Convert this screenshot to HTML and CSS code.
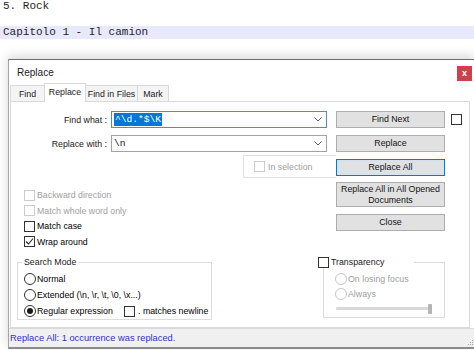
FILE: index.html
```html
<!DOCTYPE html>
<html>
<head>
<meta charset="utf-8">
<link rel="stylesheet" href="styles.css">
</head>
<body>
<div class="editor">
  <div class="line">5. Rock</div>
  <div class="line"></div>
  <div class="line current">Capitolo 1 - Il camion</div>
</div>

<div class="dialog">
  <div class="titlebar">
    <span class="title">Replace</span>
    <span class="close">x</span>
  </div>
  <div class="tabs">
    <div class="tab t-find">Find</div>
    <div class="tab t-replace active">Replace</div>
    <div class="tab t-files">Find in Files</div>
    <div class="tab t-mark">Mark</div>
  </div>
  <div class="panel">
    <div class="upper">
      <div class="left">
        <div class="field">
          <label>Find what :</label>
          <div class="combo focused">
            <span class="mono sel">^\d.*$\K</span>
            <svg class="chev" width="8" height="5" viewBox="0 0 8 5"><polyline points="0.5,0.5 4,4 7.5,0.5" fill="none" stroke="#606060" stroke-width="1"/></svg>
          </div>
        </div>
        <div class="field">
          <label>Replace with :</label>
          <div class="combo">
            <span class="mono">\n</span>
            <svg class="chev" width="8" height="5" viewBox="0 0 8 5"><polyline points="0.5,0.5 4,4 7.5,0.5" fill="none" stroke="#606060" stroke-width="1"/></svg>
          </div>
        </div>
        <div class="insel">
          <span class="cb disabled"></span>
          <span class="dis-text">In selection</span>
        </div>
        <div class="options">
          <div class="opt"><span class="cb disabled"></span><span class="dis-text">Backward direction</span></div>
          <div class="opt"><span class="cb disabled"></span><span class="dis-text">Match whole word only</span></div>
          <div class="opt"><span class="cb"></span><span>Match case</span></div>
          <div class="opt"><span class="cb checked"><svg width="9" height="9" viewBox="0 0 9 9"><polyline points="1,4.5 3.5,7 8,1.5" fill="none" stroke="#222" stroke-width="1.1"/></svg></span><span>Wrap around</span></div>
        </div>
      </div>
      <div class="buttons">
        <div class="btn">Find Next</div>
        <div class="btn gap7">Replace</div>
        <div class="btn gap7 default">Replace All</div>
        <div class="btn gap6 tall">Replace All in All Opened<br>Documents</div>
        <div class="btn gap7">Close</div>
      </div>
      <div class="side"><span class="cb"></span></div>
    </div>
    <div class="lower">
      <fieldset class="group search">
        <legend>Search Mode</legend>
        <div class="rrow"><span class="radio"></span><span>Normal</span></div>
        <div class="rrow"><span class="radio"></span><span>Extended (\n, \r, \t, \0, \x...)</span></div>
        <div class="rrow"><span class="radio on"></span><span class="regex">Regular expression</span><span class="cb"></span><span class="dotnl">. matches newline</span></div>
      </fieldset>
      <fieldset class="group transp">
        <legend><span class="cb"></span><span>Transparency</span></legend>
        <div class="trow"><span class="radio disabled"></span><span class="dis-text">On losing focus</span></div>
        <div class="trow"><span class="radio disabled"></span><span class="dis-text">Always</span></div>
        <div class="slider"><span class="track"></span><span class="thumb"></span></div>
      </fieldset>
    </div>
  </div>
  <div class="status">
    <span>Replace All: 1 occurrence was replaced.</span>
    <svg class="grip" width="7" height="7" viewBox="0 0 7 7"><rect x="5" y="1" width="1" height="1" fill="#a0a0a0"/><rect x="3" y="3" width="1" height="1" fill="#a0a0a0"/><rect x="5" y="3" width="1" height="1" fill="#a0a0a0"/><rect x="1" y="5" width="1" height="1" fill="#a0a0a0"/><rect x="3" y="5" width="1" height="1" fill="#a0a0a0"/><rect x="5" y="5" width="1" height="1" fill="#a0a0a0"/></svg>
  </div>
</div>
</body>
</html>
```

FILE: styles.css
```css
* { box-sizing: border-box; }

html, body {
  margin: 0;
  padding: 0;
}

body {
  width: 474px;
  height: 350px;
  overflow: hidden;
  background: #ffffff;
  position: relative;
  font-family: "Liberation Sans", Arial, sans-serif;
}

.editor {
  font-family: "Liberation Mono", "Courier New", monospace;
  font-size: 11px;
  line-height: 13px;
  color: #1e1e1e;
}

.line {
  height: 13px;
  padding-left: 3px;
  white-space: pre;
}

.line.current {
  background: #e8e8ff;
}

.dialog {
  position: absolute;
  left: 8px;
  top: 59px;
  width: 467px;
  height: 290px;
  background: #ffffff;
  border-top: 1px solid #6e6e6e;
  border-left: 1px solid #a6a6a6;
  border-bottom: 2px solid #8c8c8c;
  box-shadow: 0 -3px 10px rgba(0, 0, 0, 0.16);
  font-size: 8.8px;
  color: #000000;
}

.titlebar {
  height: 24px;
  display: flex;
  align-items: flex-start;
  justify-content: space-between;
  padding-left: 8px;
}

.title {
  font-size: 10px;
  margin-top: 7px;
  color: #1a1a1a;
}

.close {
  width: 15px;
  height: 15px;
  margin-top: 6px;
  margin-right: 3px;
  background: #c9434b;
  color: #ffffff;
  font-size: 9px;
  font-weight: bold;
  display: flex;
  align-items: center;
  justify-content: center;
  line-height: 1;
}

.tabs {
  height: 17px;
  display: flex;
  align-items: flex-end;
  padding-left: 1px;
}

.tab {
  height: 16px;
  border: 1px solid #d9d9d9;
  border-bottom: none;
  background: #f4f4f4;
  display: flex;
  align-items: center;
  justify-content: center;
  color: #1a1a1a;
  padding-top: 1px;
  white-space: nowrap;
}

.t-find { width: 35px; }
.t-replace { width: 42px; }
.t-files { width: 53px; }
.t-mark { width: 32px; }

.tab + .tab { margin-left: -1px; }

.tab.active {
  height: 19px;
  background: #ffffff;
  margin-bottom: -1px;
  position: relative;
  z-index: 1;
  padding-top: 0;
  padding-bottom: 2px;
}

.panel {
  margin-left: 1px;
  width: 460px;
  height: 227px;
  border: 1px solid #d9d9d9;
  background: #ffffff;
}

.upper {
  display: flex;
  padding-top: 9px;
}

.left {
  width: 325px;
}

.field {
  display: flex;
  align-items: center;
  height: 17px;
}

.field + .field { margin-top: 7px; }

.field label {
  width: 97px;
  text-align: right;
  padding-right: 1px;
  white-space: nowrap;
  color: #1a1a1a;
}

.combo {
  margin-left: 3px;
  width: 216px;
  height: 17px;
  border: 1px solid #a3a3a3;
  display: flex;
  align-items: center;
  padding-left: 2px;
}

.combo.focused {
  border-color: #5c88bb;
}

.mono {
  font-family: "Liberation Mono", "Courier New", monospace;
  font-size: 9.6px;
  line-height: 13px;
  color: #111111;
}

.sel {
  background: #0078d7;
  color: #ffffff;
  padding: 0 1px;
}

.chev {
  margin-left: auto;
  margin-right: 4px;
}

.insel {
  margin-top: 3px;
  margin-left: 232px;
  height: 23px;
  border: 1px solid #e1e1e1;
  border-right: none;
  display: flex;
  align-items: center;
  padding-left: 10px;
  gap: 3px;
}

.cb {
  width: 11px;
  height: 11px;
  border: 1px solid #333333;
  background: #ffffff;
  flex: 0 0 11px;
  display: flex;
  align-items: center;
  justify-content: center;
}

.cb.disabled {
  border-color: #cccccc;
}

.dis-text {
  color: #a0a0a0;
}

.options {
  margin-top: 9.5px;
  padding-left: 13px;
}

.opt {
  height: 15.5px;
  display: flex;
  align-items: center;
  gap: 2px;
  white-space: nowrap;
}

.buttons {
  width: 109px;
  display: flex;
  flex-direction: column;
}

.btn {
  height: 17px;
  border: 1px solid #adadad;
  background: #e1e1e1;
  display: flex;
  align-items: center;
  justify-content: center;
  text-align: center;
  line-height: 11px;
  color: #111111;
}

.btn.gap7 { margin-top: 7px; }
.btn.gap6 { margin-top: 6px; }
.btn.tall { height: 25px; }

.btn.default {
  border-color: #0078d7;
  box-shadow: inset 0 0 0 1px #cfe3f6;
}

.side {
  margin-left: 6px;
  padding-top: 3px;
}

.lower {
  display: flex;
  margin-top: 6.5px;
}

.group {
  margin: 0;
  border: 1px solid #dcdcdc;
  min-width: 0;
}

.group legend {
  padding: 0 2px;
  line-height: 12px;
  height: 12px;
  color: #1a1a1a;
}

.search {
  margin-left: 6px;
  width: 195px;
  height: 64px;
  padding: 3px 0 0 6px;
}

.search legend {
  margin-left: -2px;
}

.rrow {
  height: 16px;
  display: flex;
  align-items: center;
  gap: 1px;
  white-space: nowrap;
}

.radio {
  width: 12px;
  height: 12px;
  border: 1px solid #333333;
  border-radius: 50%;
  background: #ffffff;
  flex: 0 0 12px;
  display: flex;
  align-items: center;
  justify-content: center;
}

.radio.on::after {
  content: "";
  width: 6px;
  height: 6px;
  border-radius: 50%;
  background: #1a1a1a;
}

.radio.disabled {
  border-color: #c8c8c8;
}

.regex {
  width: 86px;
  flex: 0 0 86px;
}

.dotnl {
  margin-left: 2px;
}

.transp {
  margin-left: 111px;
  width: 122px;
  height: 62px;
  padding: 3.5px 0 0 11px;
}

.transp legend {
  display: flex;
  align-items: center;
  gap: 2px;
  margin-left: -17px;
  padding: 0 30px 0 0;
}

.trow {
  height: 15px;
  display: flex;
  align-items: center;
  gap: 1px;
  white-space: nowrap;
}

.slider {
  height: 14px;
  width: 96px;
  margin-left: 1px;
  display: flex;
  align-items: center;
}

.track {
  flex: 1;
  height: 3px;
  background: #d9d9d9;
  border-radius: 1px;
}

.thumb {
  width: 4px;
  height: 10px;
  background: #b5b5b5;
  border-radius: 1px;
  margin-left: -2px;
}

.status {
  height: 19px;
  border-top: 1px solid #dadada;
  background: #f0f0f0;
  display: flex;
  align-items: center;
  padding-left: 1px;
  color: #3030c8;
  font-size: 9.3px;
}

.grip {
  margin-left: auto;
  margin-right: 1px;
  align-self: flex-end;
  margin-bottom: 1px;
}
```
